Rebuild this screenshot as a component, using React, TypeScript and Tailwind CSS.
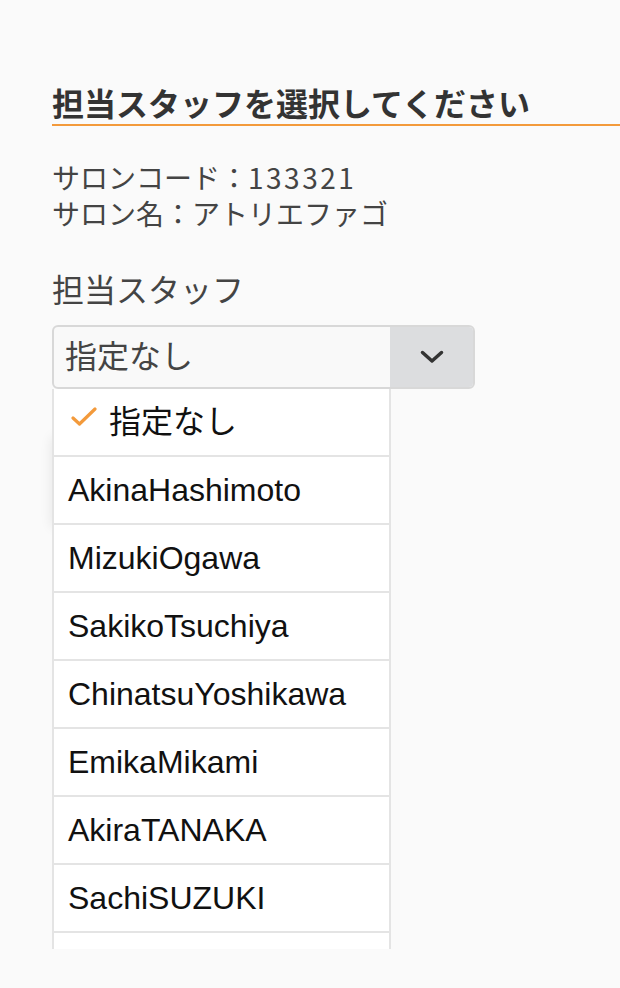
import { Fragment } from "react"

const staff = [
  "AkinaHashimoto",
  "MizukiOgawa",
  "SakikoTsuchiya",
  "ChinatsuYoshikawa",
  "EmikaMikami",
  "AkiraTANAKA",
  "SachiSUZUKI",
  "",
]

export default function App() {
  return (
    <div className="min-h-[988px] bg-[#fafafa] font-['Liberation_Sans','Noto_Sans_CJK_JP',sans-serif]">
      <div className="pt-[80px] pl-[52px]">
        <h1 className="border-b-2 border-[#f39a3b] text-[32px] leading-[44px] font-bold text-[#333] font-['Noto_Sans_CJK_JP',sans-serif]">
          担当スタッフを選択してください
        </h1>

        {/* salon info */}
        <div className="mt-[33px] text-[28px] leading-[36px] text-[#444] font-['Noto_Sans_CJK_JP',sans-serif]">
          <p>
            サロンコード：<span className="tracking-[2.5px]">133321</span>
          </p>
          <p>サロン名：アトリエファゴ</p>
        </div>

        <p className="mt-[35px] text-[32px] leading-[44px] text-[#444] font-['Noto_Sans_CJK_JP',sans-serif]">担当スタッフ</p>

        <div className="relative mt-[15px] w-[423px]">
          <div className="flex h-[64px] overflow-hidden rounded-[6px] border-2 border-[#d8d8d8] bg-[#f9f9f9]">
            <div className="flex flex-1 items-center pl-[11px] text-[32px] text-[#444]">指定なし</div>
            <div className="flex w-[83px] items-center justify-center bg-[#dcdddf]">
              <svg width="24" height="14" viewBox="0 0 24 14" fill="none">
                <polyline points="2.5,2.5 12,11 21.5,2.5" stroke="#333" strokeWidth="3.5" strokeLinecap="round" strokeLinejoin="round" />
              </svg>
            </div>
          </div>

          {/* element behind the open menu */}
          <div className="absolute top-[112px] left-0 h-[90px] w-[200px] bg-white shadow-[0_0_12px_rgba(0,0,0,0.09)]" />

          {/* open menu */}
          <div className="absolute top-full left-0 max-h-[560px] w-[339px] overflow-hidden border-x-2 border-[#e4e4e4] bg-white">
            <div className="flex h-[68px] items-center border-b-2 border-[#e4e4e4] pl-[17px] text-[32px] text-[#111]">
              <svg width="26" height="20" viewBox="0 0 26 20" fill="none" className="mr-[12px] -mt-[10px]">
                <polyline points="2,11 8.5,17 24,2" stroke="#f39a3b" strokeWidth="3.2" strokeLinecap="round" strokeLinejoin="round" />
              </svg>
              指定なし
            </div>
            {staff.map((name, i) => (
              <Fragment key={i}>
                <div className="flex h-[68px] items-center border-b-2 border-[#e4e4e4] pl-[14px] text-[32px] text-[#111]">
                  {name}
                </div>
              </Fragment>
            ))}
          </div>
        </div>
      </div>
    </div>
  )
}
